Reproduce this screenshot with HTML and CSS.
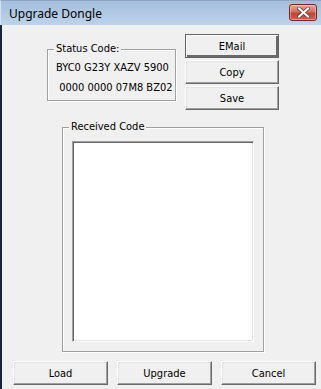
FILE: index.html
```html
<!DOCTYPE html>
<html>
<head>
<meta charset="utf-8">
<link rel="stylesheet" href="styles.css">
</head>
<body>
<div class="window">
  <div class="titlebar">
    <span class="title">Upgrade Dongle</span>
    <div class="close">
      <svg width="13" height="11" viewBox="0 0 13 11"><path d="M2 1.5 L11 9.5 M11 1.5 L2 9.5" stroke="#4a4a4a" stroke-width="3.6" stroke-linecap="square"/><path d="M2 1.5 L11 9.5 M11 1.5 L2 9.5" stroke="#ffffff" stroke-width="2" stroke-linecap="square"/></svg>
    </div>
  </div>
  <div class="client">
    <div class="top-row">
      <div class="group status">
        <span class="legend">Status Code:</span>
        <div class="code">BYC0 G23Y XAZV 5900</div>
        <div class="code"> 0000 0000 07M8 BZ02</div>
      </div>
      <div class="side-buttons">
        <div class="btn default">EMail</div>
        <div class="btn">Copy</div>
        <div class="btn">Save</div>
      </div>
    </div>
    <div class="group received">
      <span class="legend">Received Code</span>
      <div class="textarea"></div>
    </div>
    <div class="bottom-row">
      <div class="btn wide">Load</div>
      <div class="btn wide">Upgrade</div>
      <div class="btn wide">Cancel</div>
    </div>
  </div>
</div>
</body>
</html>
```
FILE: styles.css
```css
html, body {
  margin: 0;
  padding: 0;
  background: #f0f0f0;
}
.window {
  width: 321px;
  height: 389px;
  overflow: hidden;
  font-family: "DejaVu Sans Condensed", "Liberation Sans", sans-serif;
  font-size: 11px;
  color: #000;
}
.titlebar {
  height: 25px;
  box-sizing: border-box;
  display: flex;
  align-items: center;
  justify-content: space-between;
  padding: 0 4px 0 8px;
  background: linear-gradient(#a3bedc, #bdd3ea);
  border-left: 1px solid #d6e2ee;
  border-top: 1px solid #8ea6c2;
}
.title {
  font-family: "Noto Sans", "Open Sans", sans-serif;
  font-size: 12px;
  color: #000;
}
.close {
  width: 28px;
  height: 17px;
  box-sizing: border-box;
  border: 1px solid #6e2a22;
  border-radius: 3px;
  background: linear-gradient(#e8a394 0%, #d7705c 45%, #c24430 55%, #d2634a 100%);
  box-shadow: inset 0 0 0 1px rgba(255,255,255,0.35);
  display: flex;
  align-items: center;
  justify-content: center;
  margin-top: -2px;
}
.client {
  height: 364px;
  border-left: 2px solid #16273b;
  display: flex;
  flex-direction: column;
}
.top-row {
  display: flex;
  align-items: flex-start;
  padding-left: 45px;
  margin-top: 9px;
}
.group {
  position: relative;
  box-sizing: border-box;
  border: 1px solid #a0a0a0;
  box-shadow: 1px 1px 0 #fff, inset 1px 1px 0 #fff;
}
.legend {
  position: absolute;
  top: -8px;
  left: 6px;
  padding: 0 2px;
  background: #f0f0f0;
  line-height: 14px;
  white-space: nowrap;
}
.status {
  width: 129px;
  height: 52px;
  margin-top: 15px;
  padding: 8px 0 0 8px;
}
.code {
  line-height: 20px;
  white-space: pre;
}
.side-buttons {
  display: flex;
  flex-direction: column;
  gap: 2px;
  margin-left: 9px;
}
.btn {
  box-sizing: border-box;
  width: 94px;
  height: 24px;
  display: flex;
  align-items: center;
  justify-content: center;
  background: #f0f0f0;
  border: 1px solid;
  border-color: #ffffff #696969 #696969 #ffffff;
  box-shadow: inset -1px -1px 0 #a0a0a0, inset 1px 1px 0 #e3e3e3;
}
.btn.default {
  border: 1px solid #646464;
  box-shadow: inset 1px 1px 0 #fff, inset -2px -2px 0 #696969, inset -1px -1px 0 #a0a0a0;
}
.received {
  width: 202px;
  height: 225px;
  margin-left: 60px;
  margin-top: 17px;
  padding: 13px 0 0 9px;
}
.textarea {
  box-sizing: border-box;
  width: 182px;
  height: 201px;
  background: #fff;
  border: 1px solid;
  border-color: #a0a0a0 #ffffff #ffffff #a0a0a0;
  box-shadow: inset 1px 1px 0 #696969, inset -1px -1px 0 #e3e3e3;
}
.bottom-row {
  display: flex;
  gap: 9px;
  padding-left: 11px;
  margin-top: 9px;
}
.btn.wide {
  width: 95px;
}
```
